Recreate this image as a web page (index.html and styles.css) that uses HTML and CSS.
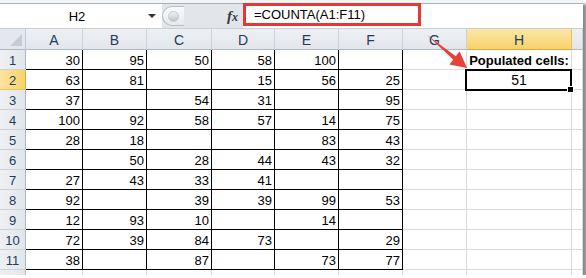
FILE: index.html
```html
<!DOCTYPE html>
<html lang="en">
<head>
    <meta charset="UTF-8">
    <title>COUNTA populated cells</title>
    <link rel="stylesheet" href="styles.css">
</head>
<body>
    <div class="window">
        <!-- formula bar -->
        <div class="formula-bar">
            <div class="name-box">
                <span class="name">H2</span>
                <span class="drop"></span>
            </div>
            <div class="splitter">
                <span class="knob"><span class="dot"></span></span>
                <span class="fx">f<i>x</i></span>
            </div>
            <div class="formula">
                <span class="highlight">=COUNTA(A1:F11)</span>
            </div>
        </div>

        <!-- sheet -->
        <div class="sheet">
            <div class="grid">
                <div class="corner"><span class="tri"></span></div>
                <div class="ch">A</div><div class="ch">B</div><div class="ch">C</div><div class="ch">D</div><div class="ch">E</div><div class="ch">F</div><div class="ch">G</div><div class="ch sel">H</div><div class="ch"></div>

                <div class="rh">1</div>
                <div class="c b">30</div><div class="c b">95</div><div class="c b">50</div><div class="c b">58</div><div class="c b">100</div><div class="c b"></div>
                <div class="c"></div><div class="c label">Populated cells:</div><div class="c"></div>

                <div class="rh sel">2</div>
                <div class="c b">63</div><div class="c b">81</div><div class="c b"></div><div class="c b">15</div><div class="c b">56</div><div class="c b">25</div>
                <div class="c"></div><div class="c active">51</div><div class="c"></div>

                <div class="rh">3</div>
                <div class="c b">37</div><div class="c b"></div><div class="c b">54</div><div class="c b">31</div><div class="c b"></div><div class="c b">95</div>
                <div class="c"></div><div class="c"></div><div class="c"></div>

                <div class="rh">4</div>
                <div class="c b">100</div><div class="c b">92</div><div class="c b">58</div><div class="c b">57</div><div class="c b">14</div><div class="c b">75</div>
                <div class="c"></div><div class="c"></div><div class="c"></div>

                <div class="rh">5</div>
                <div class="c b">28</div><div class="c b">18</div><div class="c b"></div><div class="c b"></div><div class="c b">83</div><div class="c b">43</div>
                <div class="c"></div><div class="c"></div><div class="c"></div>

                <div class="rh">6</div>
                <div class="c b"></div><div class="c b">50</div><div class="c b">28</div><div class="c b">44</div><div class="c b">43</div><div class="c b">32</div>
                <div class="c"></div><div class="c"></div><div class="c"></div>

                <div class="rh">7</div>
                <div class="c b">27</div><div class="c b">43</div><div class="c b">33</div><div class="c b">41</div><div class="c b"></div><div class="c b"></div>
                <div class="c"></div><div class="c"></div><div class="c"></div>

                <div class="rh">8</div>
                <div class="c b">92</div><div class="c b"></div><div class="c b">39</div><div class="c b">39</div><div class="c b">99</div><div class="c b">53</div>
                <div class="c"></div><div class="c"></div><div class="c"></div>

                <div class="rh">9</div>
                <div class="c b">12</div><div class="c b">93</div><div class="c b">10</div><div class="c b"></div><div class="c b">14</div><div class="c b"></div>
                <div class="c"></div><div class="c"></div><div class="c"></div>

                <div class="rh">10</div>
                <div class="c b">72</div><div class="c b">39</div><div class="c b">84</div><div class="c b">73</div><div class="c b"></div><div class="c b">29</div>
                <div class="c"></div><div class="c"></div><div class="c"></div>

                <div class="rh">11</div>
                <div class="c b">38</div><div class="c b"></div><div class="c b">87</div><div class="c b"></div><div class="c b">73</div><div class="c b">77</div>
                <div class="c"></div><div class="c"></div><div class="c"></div>

                <div class="rh"></div>
                <div class="c"></div><div class="c"></div><div class="c"></div><div class="c"></div><div class="c"></div><div class="c"></div>
                <div class="c"></div><div class="c"></div><div class="c"></div>
            </div>

            <!-- red pointer arrow -->
            <svg class="arrow" width="50" height="45" viewBox="420 29 50 45">
                <polygon points="427,35 455.8,56.2 459.6,51.2 467,68 449.4,64.5 453.2,59.4" fill="#e8413a"/>
            </svg>
        </div>
    </div>
</body>
</html>
```

FILE: styles.css
```css
body {
    margin: 0;
    background: #fff;
    font-family: 'Liberation Sans', Arial, sans-serif;
}

.window {
    width: 583px;
    height: 275px;
    overflow: hidden;
    background: #fff;
    box-shadow: 4px 4px 3px #8a8a8a;
}

/* formula bar */
.formula-bar {
    display: flex;
    height: 29px;
    box-sizing: border-box;
    padding-top: 3px;
    background: #f3f4f6;
    border-bottom: 1px solid #c9ced5;
}

.name-box {
    width: 162px;
    box-sizing: border-box;
    background: #fff;
    border-top: 1px solid #aab1ba;
    display: flex;
    align-items: center;
    position: relative;
}

.name {
    flex: 1;
    text-align: center;
    font-size: 13px;
    color: #000;
    padding-left: 6px;
}

.drop {
    width: 0;
    height: 0;
    border-left: 4px solid transparent;
    border-right: 4px solid transparent;
    border-top: 4px solid #333;
    margin-right: 6px;
}

.splitter {
    width: 81px;
    box-sizing: border-box;
    background: #e2e5e9;
    border-top: 1px solid #aab1ba;
    display: flex;
    align-items: center;
    justify-content: space-between;
}

.knob {
    width: 22px;
    height: 20px;
    box-sizing: border-box;
    border: 1px solid #b8bec6;
    border-right: none;
    border-radius: 11px 0 0 11px;
    background: linear-gradient(#fbfbfc, #e6e9ec);
    display: flex;
    align-items: center;
    padding-left: 5px;
}

.dot {
    width: 9px;
    height: 9px;
    border-radius: 50%;
    background: linear-gradient(#f2f3f5, #bfc4ca);
    border: 1px solid #c2c7cd;
}

.fx {
    font-family: 'Liberation Serif', serif;
    font-style: italic;
    font-weight: bold;
    font-size: 15px;
    color: #3a3a3a;
    margin-right: 5px;
}

.fx i {
    font-size: 12px;
}

.formula {
    flex: 1;
    background: #fff;
    border-top: 1px solid #aab1ba;
    display: flex;
    align-items: stretch;
}

.highlight {
    width: 178px;
    height: 23px;
    margin-top: -1px;
    box-sizing: border-box;
    border: 3px solid #e83633;
    padding-left: 8px;
    font-size: 13px;
    line-height: 17px;
    color: #000;
}

/* sheet */
.sheet {
    position: relative;
}

.grid {
    display: grid;
    grid-template-columns: 26px 57px 64px 65px 63px 64px 64px 64px 105px 11px;
    grid-template-rows: 21px repeat(11, 20px) 6px;
}

.grid > div {
    box-sizing: border-box;
    font-size: 13px;
}

.corner {
    background: #e4e8ed;
    border-right: 1px solid #c3c9d1;
    border-bottom: 1px solid #aeb6c1;
    position: relative;
}

.tri {
    position: absolute;
    right: 3px;
    bottom: 3px;
    width: 0;
    height: 0;
    border-left: 12px solid transparent;
    border-bottom: 12px solid #c7ccd3;
}

.ch {
    background: linear-gradient(#eef0f3, #e2e6eb);
    border-right: 1px solid #cdd2d9;
    border-bottom: 1px solid #aeb6c1;
    color: #243b5c;
    font-size: 14px !important;
    text-align: center;
    padding-top: 2px;
    line-height: 18px;
}

.ch.sel {
    background: linear-gradient(#fce7a8, #f8d36b);
    border-right-color: #f0c050;
    border-bottom-color: #e2a93a;
}

.rh {
    background: linear-gradient(90deg, #eef0f3, #e2e6eb);
    border-right: 1px solid #aeb6c1;
    border-bottom: 1px solid #cdd2d9;
    color: #243b5c;
    display: flex;
    align-items: flex-end;
    justify-content: center;
    padding-bottom: 1px;
    line-height: 15px;
}

.rh.sel {
    background: linear-gradient(90deg, #fce3a0, #f8d36b);
    border-right-color: #e2a93a;
    border-bottom-color: #f0c050;
}

.c {
    border-right: 1px solid #d9dadb;
    border-bottom: 1px solid #d9dadb;
    display: flex;
    align-items: flex-end;
    justify-content: flex-end;
    padding: 0 2px 1px 0;
    line-height: 15px;
    color: #000;
}

.c.b {
    border-right-color: #000;
    border-bottom-color: #000;
}

.c.label {
    justify-content: center;
    font-weight: bold;
    padding-right: 0;
    white-space: nowrap;
}

.c.active {
    justify-content: center;
    position: relative;
    padding-right: 0;
    font-size: 14px !important;
}

/* selection frame with fill handle */
.c.active::after {
    content: "";
    position: absolute;
    left: -2px;
    top: -1px;
    right: -1px;
    bottom: -2px;
    border: 2px solid #000;
}

.c.active::before {
    content: "";
    position: absolute;
    right: -3px;
    bottom: -4px;
    width: 5px;
    height: 5px;
    background: #000;
    border: 1px solid #fff;
    z-index: 1;
}

.arrow {
    position: absolute;
    left: 420px;
    top: 0;
    overflow: visible;
}
```
